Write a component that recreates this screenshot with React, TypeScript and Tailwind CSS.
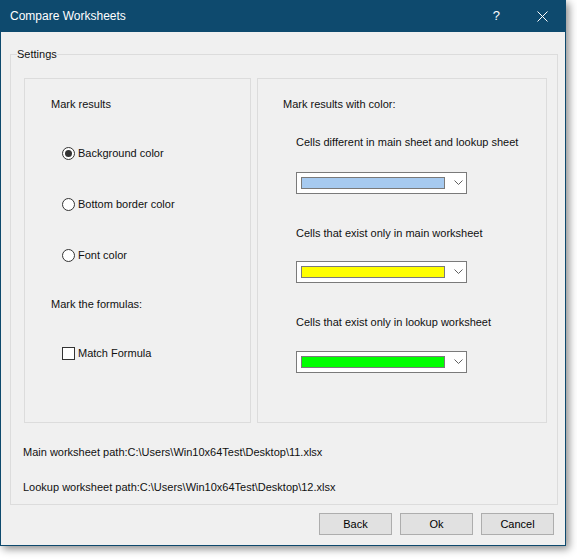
import React from 'react';

const font = { fontFamily: '"Liberation Sans", Arial, sans-serif' };

function Radio({ label, checked, className }: { label: string; checked?: boolean; className: string }) {
  return (
    <div className={`flex items-center h-[16px] ml-[37px] ${className}`}>
      <span className="w-[13px] h-[13px] rounded-full border border-[#333333] bg-white flex items-center justify-center">
        {checked && <span className="w-[7px] h-[7px] rounded-full bg-[#333333]" />}
      </span>
      <span className="ml-[3px]">{label}</span>
    </div>
  );
}

function ColorCombo({ color, className }: { color: string; className: string }) {
  return (
    <div className={`ml-[38px] w-[171px] h-[22px] border border-[#7a7a7a] bg-white flex items-center pl-[4px] ${className}`}>
      <div className="w-[144px] h-[12px] border border-[#7a7a7a]" style={{ backgroundColor: color }} />
      <svg width="9" height="6" viewBox="0 0 9 6" className="ml-[9px]">
        <path d="M0.5 0.5 L4.5 4.5 L8.5 0.5" fill="none" stroke="#606060" strokeWidth="1" />
      </svg>
    </div>
  );
}

function Button({ label }: { label: string }) {
  return (
    <button className="w-[73px] h-[22px] bg-[#e1e1e1] border border-[#adadad] text-[11px] leading-[16px] text-black">
      {label}
    </button>
  );
}

export default function App() {
  return (
    <div className="w-[577px] h-[559px] bg-white" style={font}>
      <div className="w-[566px] h-[546px] flex flex-col border border-[#0e4a6e] border-t-0 bg-[#f0f0f0] shadow-[3px_3px_8px_rgba(0,0,0,0.45)] text-[11px] leading-[16px] text-[#111111]">
        {/* title bar */}
        <div className="h-[32px] bg-[#0e4a6e] text-white flex items-center pl-[9px] pr-[17px]">
          <span className="flex-1 text-[12px]">Compare Worksheets</span>
          <span className="text-[13px] mr-[37px]">?</span>
          <svg width="11" height="11" viewBox="0 0 11 11">
            <path d="M0.5 0.5 L10.5 10.5 M10.5 0.5 L0.5 10.5" stroke="white" strokeWidth="1" />
          </svg>
        </div>

        <fieldset className="ml-[9px] mt-[14px] w-[548px] h-[459px] border border-[#dcdcdc]">
          <legend className="ml-[6px] px-0 leading-[16px]">Settings</legend>
          <div className="flex gap-[6px] mt-[16px] ml-[13px]">
            <div className="w-[227px] h-[345px] border border-[#dcdcdc] flex flex-col">
              <div className="mt-[17px] ml-[26px]">Mark results</div>
              <Radio label="Background color" checked className="mt-[33px]" />
              <Radio label="Bottom border color" className="mt-[35px]" />
              <Radio label="Font color" className="mt-[35px]" />
              <div className="mt-[33px] ml-[26px]">Mark the formulas:</div>
              <div className="flex items-center h-[16px] ml-[37px] mt-[33px]">
                <span className="w-[13px] h-[13px] border border-[#333333] bg-white" />
                <span className="ml-[3px]">Match Formula</span>
              </div>
            </div>
            <div className="w-[290px] h-[345px] border border-[#dcdcdc] flex flex-col">
              <div className="mt-[17px] ml-[25px]">Mark results with color:</div>
              <div className="mt-[22px] ml-[38px]">Cells different in main sheet and lookup sheet</div>
              <ColorCombo color="#a6caf0" className="mt-[22px]" />
              <div className="mt-[31px] ml-[38px]">Cells that exist only in main worksheet</div>
              <ColorCombo color="#ffff00" className="mt-[20px]" />
              <div className="mt-[31px] ml-[38px]">Cells that exist only in lookup worksheet</div>
              <ColorCombo color="#00ff00" className="mt-[21px]" />
            </div>
          </div>
          <div className="mt-[21px] ml-[12px]">Main worksheet path:C:\Users\Win10x64Test\Desktop\11.xlsx</div>
          <div className="mt-[19px] ml-[12px]">Lookup worksheet path:C:\Users\Win10x64Test\Desktop\12.xlsx</div>
        </fieldset>

        <div className="flex justify-end gap-[8px] mt-[8px] mr-[11px]">
          <Button label="Back" />
          <Button label="Ok" />
          <Button label="Cancel" />
        </div>
      </div>
    </div>
  );
}
